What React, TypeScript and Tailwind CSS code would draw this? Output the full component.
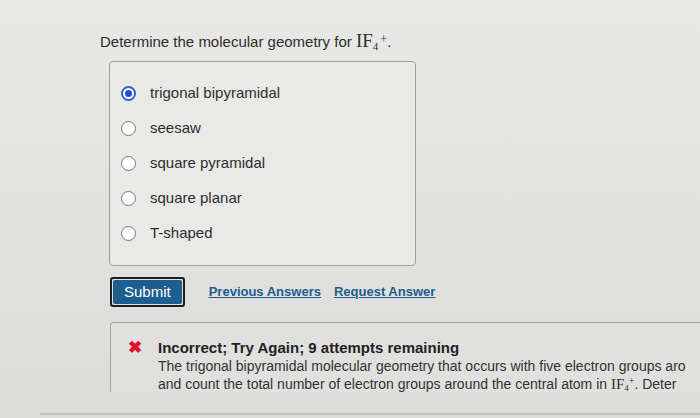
const options = [
  "trigonal bipyramidal",
  "seesaw",
  "square pyramidal",
  "square planar",
  "T-shaped",
];

function Radio({ checked }: { checked?: boolean }) {
  if (checked) {
    return (
      <span className="flex h-[15px] w-[15px] items-center justify-center rounded-full border-[2px] border-[#2f5fd0] bg-white">
        <span className="h-[7px] w-[7px] rounded-full bg-[#1f50c8]" />
      </span>
    );
  }
  return <span className="h-[15px] w-[15px] rounded-full border border-[#777] bg-white" />;
}

export default function App() {
  return (
    <main className="h-[418px] w-[700px] overflow-hidden bg-linear-to-b from-[#e8e8e6] to-[#dcdcda] font-['Liberation_Sans',Arial,sans-serif] text-[#2e2e2e]">
      <div className="pl-[100px] pt-[31px]">
        <p className="h-[20px] text-[15px] leading-[20px]">
          Determine the molecular geometry for{" "}
          <span className="font-['Liberation_Serif',serif] text-[19px]">
            IF<sub className="text-[11px]">4</sub>
            <sup className="relative -top-[4px] ml-[2px] text-[12px]">+</sup>
          </span>
          .
        </p>

        <div className="mt-[10px] ml-[9px] w-[307px] rounded-[4px] border border-[#9d9d9b] bg-[#e9e9e7] pb-[14px] pl-[11px] pt-[14px]">
          {options.map((o, i) => (
            <div key={o} className="flex h-[35px] items-center gap-[14px]">
              <Radio checked={i === 0} />
              <span className="text-[15px]">{o}</span>
            </div>
          ))}
        </div>

        <div className="mt-[11px] ml-[10px] flex items-center gap-[24px]">
          <button className="rounded-[3px] border-[2px] border-[#1d1d1d] p-[1px]">
            <span className="block rounded-[2px] bg-[#1c5f8f] px-[11px] py-[3px] text-[15px] leading-[18px] text-white">
              Submit
            </span>
          </button>
          <div className="flex gap-[13px] text-[13px] font-bold text-[#1f5c8a] underline">
            <a href="#">Previous Answers</a>
            <a href="#">Request Answer</a>
          </div>
        </div>

        <div className="mt-[15px] ml-[10px] h-[70px] overflow-hidden rounded-tl-[4px] border-l border-t border-[#a5a5a3] bg-[#e0e0de] pl-[17px] pt-[16px]">
          <div className="flex gap-[16px]">
            <span className="text-[17px] font-bold leading-[18px] text-[#e0102e]">✖</span>
            <div>
              <p className="text-[15px] font-bold leading-[18px] text-[#222]">
                Incorrect; Try Again; 9 attempts remaining
              </p>
              <p className="whitespace-nowrap text-[14px] leading-[18px] text-[#333]">
                The trigonal bipyramidal molecular geometry that occurs with five electron groups aro
              </p>
              <p className="whitespace-nowrap text-[14px] leading-[18px] text-[#333]">
                and count the total number of electron groups around the central atom in{" "}
                <span className="font-['Liberation_Serif',serif] text-[15px]">
                  IF<sub className="text-[9px]">4</sub>
                  <sup className="text-[10px]">+</sup>
                </span>
                . Deter
              </p>
            </div>
          </div>
        </div>
      </div>
      <div className="ml-[40px] mt-[21px] h-[2px] bg-[#c4c4c2]" />
    </main>
  );
}
